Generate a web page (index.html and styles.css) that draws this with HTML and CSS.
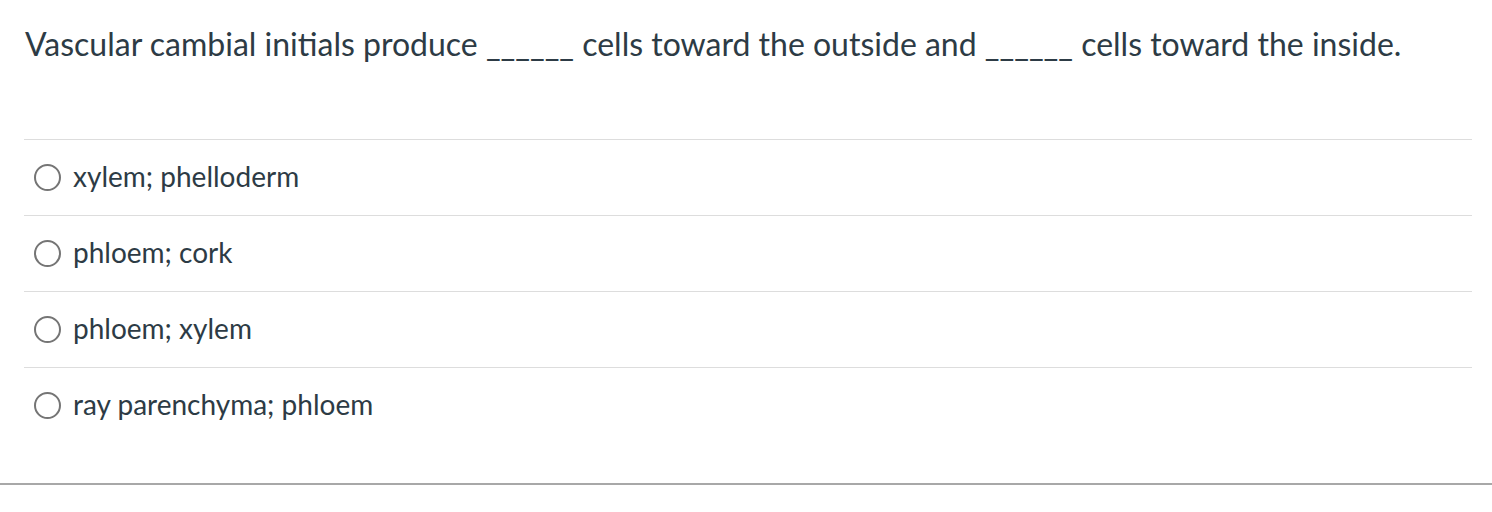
FILE: index.html
```html
<!DOCTYPE html>
<html lang="en">
<head>
<meta charset="utf-8">
<link rel="stylesheet" href="styles.css">
</head>
<body>
<div class="question">
  <div class="question-text">Vascular cambial initials produce ______ cells toward the outside and ______ cells toward the inside.</div>
  <div class="answers">
    <label class="answer"><span class="radio"></span><span class="answer-text">xylem; phelloderm</span></label>
    <label class="answer"><span class="radio"></span><span class="answer-text">phloem; cork</span></label>
    <label class="answer"><span class="radio"></span><span class="answer-text">phloem; xylem</span></label>
    <label class="answer"><span class="radio"></span><span class="answer-text">ray parenchyma; phloem</span></label>
  </div>
</div>
<div class="footer-rule"></div>
</body>
</html>
```
FILE: styles.css
```css
html, body {
  margin: 0;
  padding: 0;
  background: #ffffff;
}
body {
  font-family: Lato, "Liberation Sans", sans-serif;
  color: #2d3b45;
}
.question {
  padding: 0 20px 0 24px;
}
.question-text {
  font-size: 32px;
  line-height: 40px;
  padding-top: 24px;
  padding-left: 1px;
  white-space: nowrap;
}
.answers {
  margin-top: 75px;
  display: flex;
  flex-direction: column;
}
.answer {
  display: flex;
  align-items: center;
  gap: 12px;
  height: 75px;
  border-top: 1px solid #dddddd;
  padding-left: 10px;
}
.radio {
  box-sizing: border-box;
  width: 27px;
  height: 27px;
  border-radius: 50%;
  border: 2px solid #757575;
  flex: none;
}
.answer-text {
  font-size: 28px;
  line-height: 32px;
  padding-bottom: 4px;
}
.footer-rule {
  margin-top: 40px;
  height: 2px;
  background: #a8a8a8;
}
```
